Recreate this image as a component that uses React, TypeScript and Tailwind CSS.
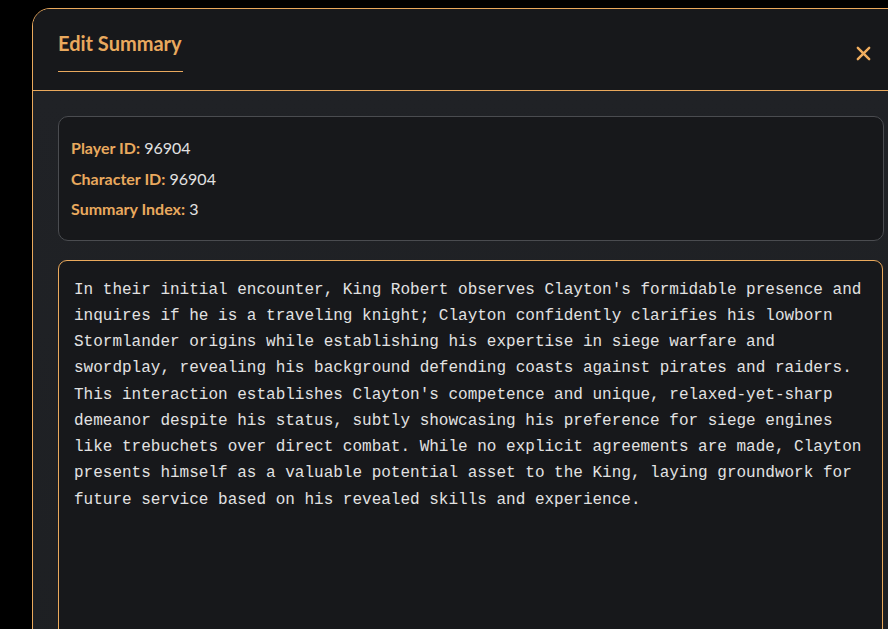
import React from 'react';

const summaryText =
  "In their initial encounter, King Robert observes Clayton's formidable presence and inquires if he is a traveling knight; Clayton confidently clarifies his lowborn Stormlander origins while establishing his expertise in siege warfare and swordplay, revealing his background defending coasts against pirates and raiders. This interaction establishes Clayton's competence and unique, relaxed-yet-sharp demeanor despite his status, subtly showcasing his preference for siege engines like trebuchets over direct combat. While no explicit agreements are made, Clayton presents himself as a valuable potential asset to the King, laying groundwork for future service based on his revealed skills and experience.";

const App = () => {
  return (
    <div className="h-[629px] w-[888px] overflow-hidden bg-black pl-[32px] pt-[8px] font-['Lato','Noto_Sans',sans-serif]">
      {/* Modal */}
      <div className="w-[878px] h-[700px] rounded-tl-[18px] rounded-tr-[18px] border border-[#eaa95c] bg-[#1e2024] overflow-hidden">
        {/* Header */}
        <div className="flex items-start justify-between h-[82px] border-b border-[#eaa95c] bg-[#17181b] px-[25px]">
          <div className="pt-[20px]">
            <h2 className="text-[20px] leading-[28px] font-bold text-[#e9a95e]">Edit Summary</h2>
            <div className="mt-[14px] h-px w-[125px] bg-[#e9a95e]" />
          </div>
          <button className="mt-[36px] mr-[12px] text-[#f0ad5f]">
            <svg width="17" height="17" viewBox="0 0 18 18" fill="none" stroke="currentColor" strokeWidth="2.6" strokeLinecap="round">
              <path d="M3 3L15 15M15 3L3 15" />
            </svg>
          </button>
        </div>

        {/* Body */}
        <div className="px-[25px] pt-[25px] bg-gradient-to-b from-[#202226] to-[#1d1f22] h-full">
          <div className="rounded-[10px] border border-[#4a4c50] bg-[#17181b] px-[12px] pt-[16px] pb-[15px] text-[16px] leading-[30.5px]">
            <div><span className="font-bold text-[#e9a95e]">Player ID:</span> <span className="text-[#e2e2e2]">96904</span></div>
            <div><span className="font-bold text-[#e9a95e]">Character ID:</span> <span className="text-[#e2e2e2]">96904</span></div>
            <div><span className="font-bold text-[#e9a95e]">Summary Index:</span> <span className="text-[#e2e2e2]">3</span></div>
          </div>

          <textarea
            className="mt-[19px] block w-[825px] h-[380px] resize-y rounded-[9px] border border-[#eaa95c] bg-[#17181b] px-[15px] pt-[16px] text-[16px] leading-[26.25px] text-[#e2e2e2] font-['Liberation_Mono','DejaVu_Sans_Mono',monospace] outline-none overflow-hidden"
            defaultValue={summaryText}
          />
        </div>
      </div>
    </div>
  );
};

export default App;
